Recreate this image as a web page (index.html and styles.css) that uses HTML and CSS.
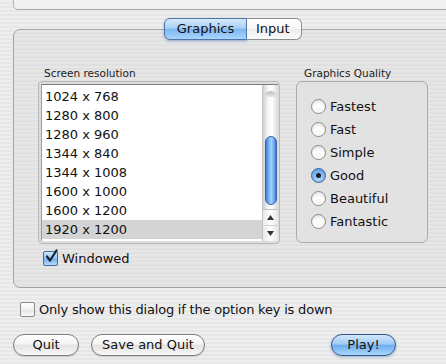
FILE: index.html
```html
<!DOCTYPE html>
<html>
<head>
<meta charset="utf-8">
<link rel="stylesheet" href="styles.css">
</head>
<body>
<div class="win">
  <div class="topbox"></div>
  <div class="tabs">
    <div class="tab sel">Graphics</div>
    <div class="tab">Input</div>
  </div>
  <div class="group">
    <div class="col-left">
      <div class="label lab-res">Screen resolution</div>
      <div class="listframe">
        <div class="list">
          <div class="rows">
            <div class="row">1024 x 768</div>
            <div class="row">1280 x 800</div>
            <div class="row">1280 x 960</div>
            <div class="row">1344 x 840</div>
            <div class="row">1344 x 1008</div>
            <div class="row">1600 x 1000</div>
            <div class="row">1600 x 1200</div>
            <div class="row selrow">1920 x 1200</div>
          </div>
          <div class="scroll">
            <div class="track">
              <div class="cap"></div>
              <div class="thumb"></div>
            </div>
            <div class="arrow"><svg width="9" height="7" viewBox="0 0 9 7"><polygon points="4.5,1 8,6 1,6" fill="#333"/></svg></div>
            <div class="arrow"><svg width="9" height="7" viewBox="0 0 9 7"><polygon points="1,1 8,1 4.5,6" fill="#333"/></svg></div>
          </div>
        </div>
      </div>
      <div class="check-row win-row">
        <span class="cbox on"><svg width="15" height="15" viewBox="0 0 15 15"><path d="M3 7.5 L6 11.5 L12.5 1.5" fill="none" stroke="#1a2230" stroke-width="2.2" stroke-linecap="round" stroke-linejoin="round"/></svg></span>
        <span class="ctext">Windowed</span>
      </div>
    </div>
    <div class="col-right">
      <div class="label lab-q">Graphics Quality</div>
      <div class="qbox">
        <div class="radio-row"><span class="radio"></span><span>Fastest</span></div>
        <div class="radio-row"><span class="radio"></span><span>Fast</span></div>
        <div class="radio-row"><span class="radio"></span><span>Simple</span></div>
        <div class="radio-row"><span class="radio on"><span class="dot"></span></span><span>Good</span></div>
        <div class="radio-row"><span class="radio"></span><span>Beautiful</span></div>
        <div class="radio-row"><span class="radio"></span><span>Fantastic</span></div>
      </div>
    </div>
  </div>
  <div class="check-row opt-row">
    <span class="cbox"></span>
    <span class="ctext opt-text">Only show this dialog if the option key is down</span>
  </div>
  <div class="buttons">
    <div class="btn quit">Quit</div>
    <div class="btn save">Save and Quit</div>
    <div class="btn play">Play!</div>
  </div>
</div>
</body>
</html>
```
FILE: styles.css
```css
html, body {
  margin: 0;
  padding: 0;
}
body {
  width: 446px;
  height: 364px;
  overflow: hidden;
  font-family: "DejaVu Sans", "Liberation Sans", sans-serif;
  color: #111;
  background: repeating-linear-gradient(#eeeeee 0 2px, #e7e7e7 2px 4px);
}
.win {
  display: flex;
  flex-direction: column;
  width: 446px;
  height: 364px;
}
.win > * {
  flex: none;
}
.topbox {
  height: 9px;
  margin-left: 13px;
  margin-right: -20px;
  border-left: 1px solid #b8b8b8;
  border-bottom: 1px solid #a9a9a9;
  border-bottom-left-radius: 5px;
  background: #f1f1f1;
}
.tabs {
  display: flex;
  margin-top: 8px;
  margin-left: 164px;
  height: 22px;
  position: relative;
  z-index: 2;
}
.tab {
  height: 20px;
  line-height: 20px;
  font-size: 13px;
  border: 1px solid #8d8d8d;
  background: linear-gradient(#ffffff 0%, #f7f7f7 50%, #ededed 51%, #fafafa 100%);
  padding: 0 9px;
  color: #111;
}
.tab.sel {
  width: 63px;
  text-align: center;
  border-color: #4f74a7;
  border-radius: 6px 0 0 6px;
  background: linear-gradient(#d6eafc 0%, #a9d0f6 45%, #7db7f0 52%, #a8d6fc 100%);
  box-shadow: 0 1px 3px rgba(40, 90, 160, 0.45);
}
.tab:last-child {
  border-left: none;
  border-radius: 0 6px 6px 0;
  width: 36px;
}
.group {
  margin: -11px -20px 0 13px;
  height: 259px;
  box-sizing: border-box;
  border: 1px solid #a4a4a4;
  border-radius: 7px;
  background: repeating-linear-gradient(#e6e6e6 0 2px, #e0e0e0 2px 4px);
  display: flex;
  gap: 16px;
  padding: 37px 0 0 24px;
}
.label {
  font-size: 10.5px;
  height: 14px;
  line-height: 13px;
  color: #222;
}
.lab-res { padding-left: 6px; }
.lab-q { padding-left: 8px; }
.col-left {
  width: 242px;
  display: flex;
  flex-direction: column;
}
.listframe {
  height: 158px;
  border: 1px solid #b9b9b9;
  border-radius: 4px;
  padding: 2px 1px 1px 2px;
  background: #dcdcdc;
}
.list {
  height: 156px;
  border-top: 1px solid #7d7d7d;
  border-left: 1px solid #9a9a9a;
  background: #fff;
  display: flex;
}
.rows {
  flex: 1;
  padding-top: 2px;
}
.row {
  height: 19px;
  line-height: 20px;
  font-size: 13px;
  padding-left: 3px;
}
.selrow {
  background: #d4d4d4;
}
.scroll {
  width: 15px;
  border-left: 1px solid #c4c4c4;
  display: flex;
  flex-direction: column;
  background: #f6f6f6;
}
.track {
  flex: 1;
  display: flex;
  flex-direction: column;
  align-items: center;
  background: linear-gradient(90deg, #d0d0d0, #f8f8f8 35%, #ffffff 60%, #d8d8d8);
  border-bottom: 1px solid #c0c0c0;
}
.cap {
  width: 13px;
  height: 6px;
  margin-top: 6px;
  border-radius: 7px 7px 0 0;
  background: linear-gradient(#bdbdbd, #e8e8e8);
}
.thumb {
  width: 12px;
  height: 69px;
  margin-top: 39px;
  border-radius: 6px;
  border: 1px solid #3c62a8;
  box-sizing: border-box;
  background: linear-gradient(90deg, #3b7be0 0%, #7fb8f6 30%, #a5d0fb 55%, #5f9bee 85%, #3a6fd0 100%);
}
.arrow {
  height: 15px;
  display: flex;
  align-items: center;
  justify-content: center;
  border-bottom: 1px solid #d0d0d0;
  background: linear-gradient(90deg, #e8e8e8, #ffffff 50%, #e6e6e6);
}
.arrow:last-child { border-bottom: none; }
.check-row {
  display: flex;
  align-items: center;
  font-size: 13px;
}
.win-row {
  margin-top: 6px;
  padding-left: 5px;
  height: 16px;
}
.cbox {
  width: 13px;
  height: 13px;
  border: 1px solid #8a8a8a;
  border-radius: 2px;
  background: linear-gradient(#ffffff, #f0f0f0 50%, #e2e2e2 51%, #fafafa);
  position: relative;
  flex: none;
}
.cbox.on {
  border-color: #48679a;
  background: linear-gradient(#cfe6fc 0%, #8fc2f3 50%, #6eaef0 51%, #b6dcfd 100%);
}
.cbox svg {
  position: absolute;
  left: 0;
  top: -3px;
}
.ctext { margin-left: 4px; }
.opt-text { letter-spacing: -0.2px; }
.col-right {
  width: 132px;
  display: flex;
  flex-direction: column;
}
.qbox {
  border: 1px solid #ababab;
  border-radius: 6px;
  background: #e2e2e2;
  padding-top: 13px;
  box-sizing: border-box;
  height: 162px;
}
.radio-row {
  display: flex;
  align-items: center;
  height: 23px;
  padding-left: 14px;
  font-size: 13px;
}
.radio {
  width: 13px;
  height: 13px;
  border: 1px solid #8a8a8a;
  border-radius: 50%;
  background: radial-gradient(circle at 50% 75%, #f4f4f4, #ffffff 40%, #dadada 100%);
  margin-right: 4px;
  display: flex;
  align-items: center;
  justify-content: center;
  flex: none;
}
.radio.on {
  border-color: #3d5f95;
  background: radial-gradient(circle at 50% 70%, #b5dbfd, #7db7f2 50%, #4c8ae0 100%);
}
.dot {
  width: 5px;
  height: 5px;
  border-radius: 50%;
  background: #1a1e26;
}
.opt-row {
  margin-top: 14px;
  padding-left: 20px;
  height: 14px;
}
.buttons {
  display: flex;
  margin-top: 18px;
  padding-left: 13px;
}
.btn {
  height: 20px;
  line-height: 20px;
  font-size: 13px;
  text-align: center;
  border: 1px solid #7e7e7e;
  border-radius: 11px;
  background: linear-gradient(#ffffff 0%, #f4f4f4 45%, #e3e3e3 52%, #f7f7f7 100%);
  box-shadow: 0 1px 1px rgba(0,0,0,0.15);
}
.quit { width: 64px; }
.save { width: 112px; margin-left: 12px; }
.play {
  width: 63px;
  margin-left: 126px;
  border-color: #34568c;
  background: linear-gradient(#d2e8fc 0%, #9fcbf6 45%, #6fadef 52%, #a8d7fc 100%);
  box-shadow: 0 1px 3px rgba(40, 90, 160, 0.45);
}
```
